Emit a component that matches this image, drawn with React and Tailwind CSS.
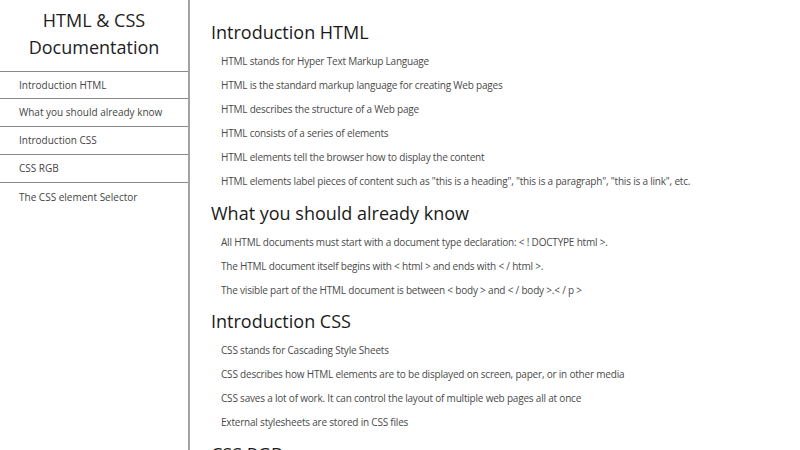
import React from 'react';

const sections = [
  {
    title: 'Introduction HTML',
    items: [
      'HTML stands for Hyper Text Markup Language',
      'HTML is the standard markup language for creating Web pages',
      'HTML describes the structure of a Web page',
      'HTML consists of a series of elements',
      'HTML elements tell the browser how to display the content',
      'HTML elements label pieces of content such as "this is a heading", "this is a paragraph", "this is a link", etc.',
    ],
  },
  {
    title: 'What you should already know',
    items: [
      'All HTML documents must start with a document type declaration: < ! DOCTYPE html >.',
      'The HTML document itself begins with < html > and ends with < / html >.',
      'The visible part of the HTML document is between < body > and < / body >.< / p >',
    ],
  },
  {
    title: 'Introduction CSS',
    items: [
      'CSS stands for Cascading Style Sheets',
      'CSS describes how HTML elements are to be displayed on screen, paper, or in other media',
      'CSS saves a lot of work. It can control the layout of multiple web pages all at once',
      'External stylesheets are stored in CSS files',
    ],
  },
  {
    title: 'CSS RGB',
    items: [
      'In CSS, a color can be specified as an RGB value, using this formula: rgb(red, green, blue)',
    ],
  },
];

const App = () => {
  return (
    <div className="flex h-[450px] w-[800px] overflow-hidden bg-white font-['Open_Sans',sans-serif]">
      {/* Sidebar */}
      <nav className="w-[190px] shrink-0 border-r-2 border-[#9ea3a6] h-full">
        <header className="h-[71px] flex flex-col items-center justify-center text-[18px] leading-[27px] text-[#222] text-center pb-[3px]">
          <span>HTML &amp; CSS</span>
          <span>Documentation</span>
        </header>
        {sections.concat([{ title: 'The CSS element Selector' }]).map((s, i) => (
          <div
            key={i}
            className={`h-[28px] flex items-center pl-[19px] text-[10px] text-[#444] ${i < 4 ? 'border-b border-[#8a8a8a]' : ''} ${i === 0 ? 'border-t border-[#8a8a8a]' : ''}`}
          >
            {s.title}
          </div>
        ))}
      </nav>

      {/* Main */}
      <main className="flex-1 pl-[21px] pt-[18px]">
        {sections.map((s, i) => (
          <section key={i} className="mb-[5.5px]">
            <h2 className="text-[18px] leading-[28px] text-[#1a1a1a] mb-[3px]">{s.title}</h2>
            {s.items.map((p, j) => (
              <p key={j} className="pl-[10px] text-[10px] tracking-[-0.2px] leading-[24px] text-[#4a4a4a]">
                {p}
              </p>
            ))}
          </section>
        ))}
      </main>
    </div>
  );
};

export default App;
